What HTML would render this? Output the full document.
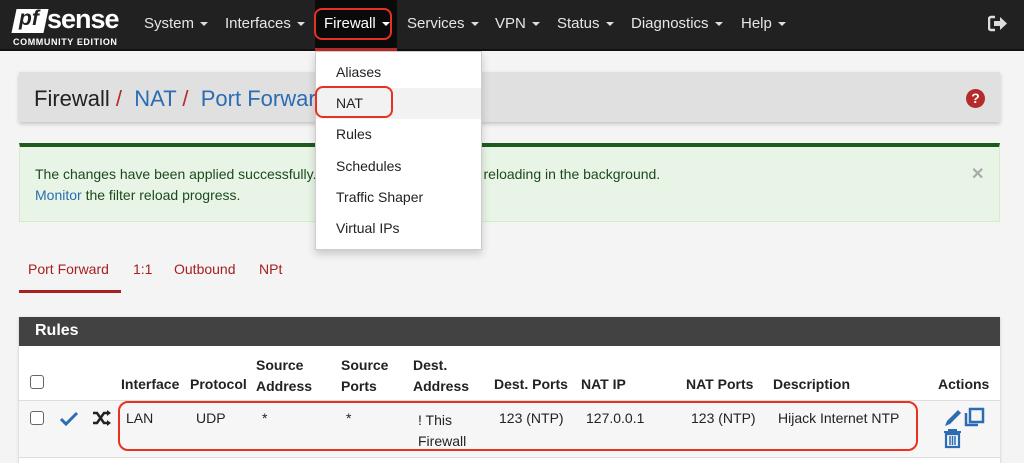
<!DOCTYPE html>
<html><head><meta charset="utf-8"><style>
*{box-sizing:border-box;margin:0;padding:0}
body{width:1024px;height:463px;overflow:hidden;background:#f4f4f4;font-family:"Liberation Sans",sans-serif;font-size:14px;color:#222;position:relative}
.nav{position:absolute;left:0;top:0;width:1024px;height:51px;background:#212121;border-bottom:2px solid #111}
.nav .it{position:absolute;top:15px;color:#e6e6e6;font-size:15px;white-space:nowrap}
.car{display:inline-block;width:0;height:0;border-left:4px solid transparent;border-right:4px solid transparent;border-top:4px solid #ddd;vertical-align:middle;margin-left:6px}
.abs{position:absolute;white-space:nowrap}
.red{border:2px solid #e8311f;border-radius:8px;position:absolute}
</style></head><body>
<div class="nav">
 <div class="abs" style="left:14px;top:7px;width:110px;height:26px">
  <div class="abs" style="left:0;top:2px;width:32px;height:24px;background:#fff;transform:skewX(-12deg)"></div>
  <div class="abs" style="left:5px;top:0px;font:italic bold 21px 'Liberation Sans';color:#212121">pf</div>
  <div class="abs" style="left:33px;top:-3px;font:bold 27px 'Liberation Sans';color:#fff;letter-spacing:-1px">sense</div>
 </div>
 <div class="abs" style="left:13px;top:37px;font:bold 9px 'Liberation Sans';color:#fff;letter-spacing:0.6px">COMMUNITY EDITION</div>
 <div class="it" style="left:144px">System<span class="car"></span></div>
 <div class="it" style="left:225px">Interfaces<span class="car"></span></div>
 <div class="abs" style="left:315px;top:0;width:82px;height:51px;background:#0a0a0a;border-bottom:3px solid #b52a2a"></div>
 <div class="it" style="left:324px;color:#fff">Firewall<span class="car" style="border-top-color:#fff"></span></div>
 <div class="it" style="left:407px">Services<span class="car"></span></div>
 <div class="it" style="left:495px">VPN<span class="car"></span></div>
 <div class="it" style="left:557px">Status<span class="car"></span></div>
 <div class="it" style="left:631px">Diagnostics<span class="car"></span></div>
 <div class="it" style="left:741px">Help<span class="car"></span></div>
 <svg class="abs" style="left:988px;top:15px" width="20" height="17" viewBox="0 0 20 17"><path d="M7 2H3a2 2 0 0 0-2 2v9a2 2 0 0 0 2 2h4" stroke="#ddd" stroke-width="2.5" fill="none"/><path d="M6 6h6V2l7 6.5-7 6.5v-4H6z" fill="#ddd"/></svg>
</div>
<div class="red" style="left:314px;top:8px;width:78px;height:32px"></div>

<div class="abs" style="left:19px;top:72px;width:981px;height:50px;background:#e0e0e0;box-shadow:0 2px 4px rgba(0,0,0,.2)"></div>
<div class="abs" style="left:34px;top:86px;font-size:22px;color:#222">Firewall <span style="color:#b52a2a">/</span> &nbsp;<span style="color:#2b6cb3">NAT</span> <span style="color:#b52a2a">/</span> &nbsp;<span style="color:#2b6cb3">Port Forward</span></div>
<div class="abs" style="left:966px;top:89px;width:19px;height:19px;border-radius:50%;background:#b52a2a;color:#fff;font:bold 14px 'Liberation Sans';text-align:center;line-height:19px">?</div>

<div class="abs" style="left:19px;top:143px;width:981px;height:79px;background:#e8f4e6;border:1px solid #d4ecc9;border-top:4px solid #1e5a1e"></div>
<div class="abs" style="left:35px;top:164px;color:#1c4a1c;font-size:14px;line-height:21px">The changes have been applied successfully. The firewall rules are now reloading in the background.<br><span style="color:#2b6cb3">Monitor</span> the filter reload progress.</div>
<div class="abs" style="left:971px;top:164px;color:#aaa;font:bold 16px 'Liberation Sans'">✕</div>

<div class="abs" style="left:28px;top:261px;color:#a52020;font-size:14px">Port Forward</div>
<div class="abs" style="left:133px;top:261px;color:#a52020">1:1</div>
<div class="abs" style="left:174px;top:261px;color:#a52020">Outbound</div>
<div class="abs" style="left:259px;top:261px;color:#a52020">NPt</div>
<div class="abs" style="left:19px;top:290px;width:102px;height:3px;background:#a52020"></div>

<div class="abs" style="left:19px;top:317px;width:981px;height:146px;background:#fff;box-shadow:0 1px 3px rgba(0,0,0,.2)"></div>
<div class="abs" style="left:19px;top:317px;width:981px;height:29px;background:#424242"></div>
<div class="abs" style="left:35px;top:322px;color:#fff;font:bold 16px 'Liberation Sans'">Rules</div>
<div class="abs" style="left:19px;top:400px;width:981px;height:1px;background:#ddd"></div>
<div class="abs" style="left:19px;top:401px;width:981px;height:57px;background:#f6f6f6"></div>
<div class="abs" style="left:19px;top:457px;width:981px;height:1px;background:#ddd"></div>
<div style="position:absolute;left:0;top:0;font-weight:bold;font-size:14px;color:#222">
 <div class="abs" style="left:121px;top:376px">Interface</div>
 <div class="abs" style="left:190px;top:376px">Protocol</div>
 <div class="abs" style="left:256px;top:355px;line-height:21px">Source<br>Address</div>
 <div class="abs" style="left:341px;top:355px;line-height:21px">Source<br>Ports</div>
 <div class="abs" style="left:413px;top:355px;line-height:21px">Dest.<br>Address</div>
 <div class="abs" style="left:494px;top:376px">Dest. Ports</div>
 <div class="abs" style="left:581px;top:376px">NAT IP</div>
 <div class="abs" style="left:686px;top:376px">NAT Ports</div>
 <div class="abs" style="left:773px;top:376px">Description</div>
 <div class="abs" style="left:938px;top:376px">Actions</div>
</div>
<div class="abs" style="left:30px;top:375px;width:14px;height:14px;border:1.5px solid #666;border-radius:3px;background:#fff"></div>
<div class="abs" style="left:30px;top:411px;width:14px;height:14px;border:1.5px solid #666;border-radius:3px;background:#fff"></div>
<svg class="abs" style="left:59px;top:411px" width="20" height="15" viewBox="0 0 20 15"><path d="M2 8l5 5L18 2" stroke="#2b6cb3" stroke-width="3" fill="none"/></svg>
<svg class="abs" style="left:92px;top:410px" width="19" height="16" viewBox="0 0 19 16"><path d="M1 3h4l7 10h4M1 13h4l7-10h4" stroke="#222" stroke-width="2.5" fill="none"/><path d="M15 0l4 3-4 3zM15 10l4 3-4 3z" fill="#222"/></svg>
<div style="position:absolute;left:0;top:0;font-size:14px;color:#222">
 <div class="abs" style="left:126px;top:410px">LAN</div>
 <div class="abs" style="left:196px;top:410px">UDP</div>
 <div class="abs" style="left:262px;top:410px">*</div>
 <div class="abs" style="left:346px;top:410px">*</div>
 <div class="abs" style="left:418px;top:410px;line-height:21px">! This<br>Firewall</div>
 <div class="abs" style="left:499px;top:410px">123 (NTP)</div>
 <div class="abs" style="left:586px;top:410px">127.0.0.1</div>
 <div class="abs" style="left:691px;top:410px">123 (NTP)</div>
 <div class="abs" style="left:778px;top:410px">Hijack Internet NTP</div>
</div>
<svg class="abs" style="left:943px;top:407px" width="44" height="42" viewBox="0 0 44 42"><path d="M2 19l2-5 11-11 3 3-11 11z" fill="#2b6cb3"/><rect x="27" y="2" width="13" height="13" fill="none" stroke="#2b6cb3" stroke-width="2.5"/><path d="M23 6v12h12" fill="none" stroke="#2b6cb3" stroke-width="2.5"/><path d="M1 25h17M6 25v-2h7v2" stroke="#2b6cb3" stroke-width="2" fill="none"/><path d="M3 27h13v13H3z" fill="none" stroke="#2b6cb3" stroke-width="2.2"/><path d="M7 29v9M9.5 29v9M12 29v9" stroke="#2b6cb3" stroke-width="1.5"/></svg>
<div class="red" style="left:118px;top:401px;width:800px;height:50px;border-radius:10px"></div>

<div class="abs" style="left:315px;top:51px;width:167px;height:199px;background:#fff;border:1px solid #ccc;box-shadow:0 4px 8px rgba(0,0,0,.18)"></div>
<div class="abs" style="left:316px;top:88px;width:165px;height:31px;background:#f2f2f2"></div>
<div style="position:absolute;left:336px;top:0;font-size:14px;color:#222">
 <div class="abs" style="left:0;top:64px">Aliases</div>
 <div class="abs" style="left:0;top:95px">NAT</div>
 <div class="abs" style="left:0;top:126px">Rules</div>
 <div class="abs" style="left:0;top:158px">Schedules</div>
 <div class="abs" style="left:0;top:189px">Traffic Shaper</div>
 <div class="abs" style="left:0;top:220px">Virtual IPs</div>
</div>
<div class="red" style="left:315px;top:86px;width:78px;height:32px"></div>
</body></html>
